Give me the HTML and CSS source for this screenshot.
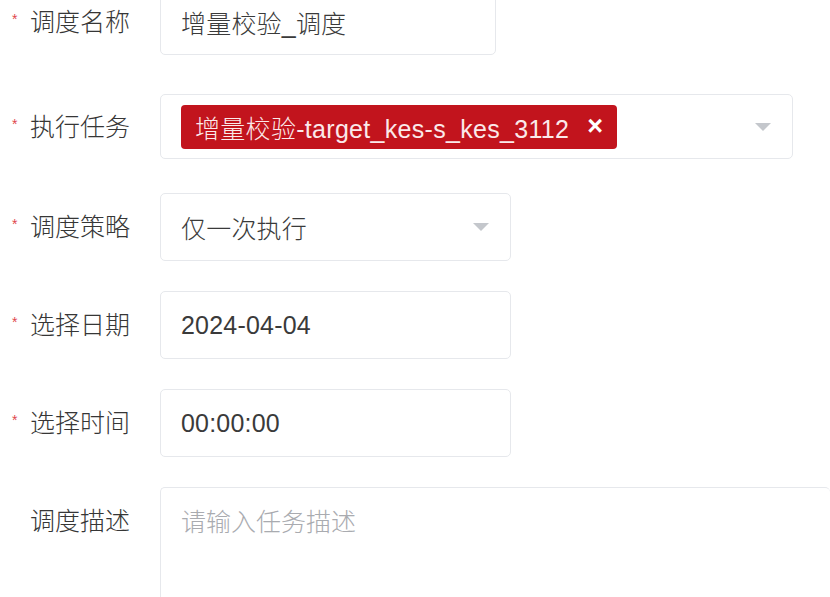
FILE: index.html
```html
<!DOCTYPE html>
<html lang="zh-CN">
<head>
<meta charset="utf-8">
<title>调度</title>
<link rel="stylesheet" href="styles.css">
</head>
<body>
<form class="form">
  <div class="row row--first">
    <label class="label"><span class="req">*</span><span class="label-text">调度名称</span></label>
    <div class="control control--name"><span class="value">增量校验_调度</span></div>
  </div>

  <div class="row row--tags">
    <label class="label"><span class="req">*</span><span class="label-text">执行任务</span></label>
    <div class="control control--wide control--tags">
      <span class="tag"><span class="tag-text">增量校验-target_kes-s_kes_3112</span><span class="tag-close">×</span></span>
      <svg class="arrow" width="16" height="8" viewBox="0 0 16 8"><path d="M0 0 H16 L8 8 Z" fill="#c4c7cc"/></svg>
    </div>
  </div>

  <div class="row">
    <label class="label"><span class="req">*</span><span class="label-text">调度策略</span></label>
    <div class="control control--select">
      <span class="value">仅一次执行</span>
      <svg class="arrow" width="16" height="8" viewBox="0 0 16 8"><path d="M0 0 H16 L8 8 Z" fill="#c4c7cc"/></svg>
    </div>
  </div>

  <div class="row">
    <label class="label"><span class="req">*</span><span class="label-text">选择日期</span></label>
    <div class="control"><span class="value">2024-04-04</span></div>
  </div>

  <div class="row">
    <label class="label"><span class="req">*</span><span class="label-text">选择时间</span></label>
    <div class="control"><span class="value">00:00:00</span></div>
  </div>

  <div class="row row--last">
    <label class="label"><span class="req req--none"></span><span class="label-text">调度描述</span></label>
    <div class="control control--area"><span class="placeholder">请输入任务描述</span></div>
  </div>
</form>
</body>
</html>
```

FILE: styles.css
```css
html, body {
  margin: 0;
  padding: 0;
  background: #ffffff;
  overflow: hidden;
}

body {
  width: 830px;
  height: 597px;
  font-family: "Liberation Sans", "Noto Sans CJK SC", sans-serif;
  font-size: 25px;
  font-weight: 300;
  color: #3b3b3b;
}

.form {
  margin: 0;
  display: flex;
  flex-direction: column;
}

.row {
  display: flex;
  align-items: flex-start;
  margin-bottom: 30px;
}

.row--first {
  margin-top: -12px;
  margin-bottom: 39px;
}

.row--tags {
  margin-bottom: 34px;
}

.row--last {
  margin-bottom: 0;
}

.label {
  display: flex;
  align-items: center;
  box-sizing: border-box;
  width: 160px;
  flex: 0 0 160px;
  height: 68px;
  padding-left: 12px;
  color: #363636;
}

.row--first .label { height: 67px; }
.row--tags .label { height: 65px; }

.req {
  width: 18px;
  flex: 0 0 18px;
  color: #e0474c;
  font-size: 14px;
  line-height: 1;
  align-self: center;
  margin-top: -6px;
}

.label-text {
  line-height: 30px;
  white-space: nowrap;
}

.control {
  box-sizing: border-box;
  width: 351px;
  height: 68px;
  border: 1px solid #e6e8ec;
  border-radius: 5px;
  background: #ffffff;
  display: flex;
  align-items: center;
  padding: 0 20px;
}

.control--name {
  width: 336px;
  height: 67px;
}

.control--wide {
  width: 633px;
  height: 65px;
}

.control--tags {
  padding-left: 20px;
  padding-right: 21px;
  justify-content: space-between;
}

.control--select {
  justify-content: space-between;
  padding-right: 21px;
}

.control--area {
  width: 700px;
  height: 110px;
  align-items: flex-start;
  padding-top: 14px;
  border-right: none;
  border-bottom: none;
  border-bottom-left-radius: 0;
}

.value {
  color: #3a3a3a;
  white-space: nowrap;
  letter-spacing: 0.2px;
}

.placeholder {
  color: #a9abb0;
  white-space: nowrap;
}

.tag {
  display: inline-flex;
  align-items: center;
  box-sizing: border-box;
  height: 44px;
  padding: 0 14px;
  background: #c2141d;
  border-radius: 4px;
  color: #fbe9ea;
  white-space: nowrap;
}

.tag-text {
  font-size: 25px;
  letter-spacing: 0.3px;
}

.tag-close {
  margin-left: 18px;
  font-size: 27px;
  font-weight: bold;
  line-height: 1;
  color: #ffffff;
}

.arrow {
  display: block;
  flex: 0 0 auto;
}
```
